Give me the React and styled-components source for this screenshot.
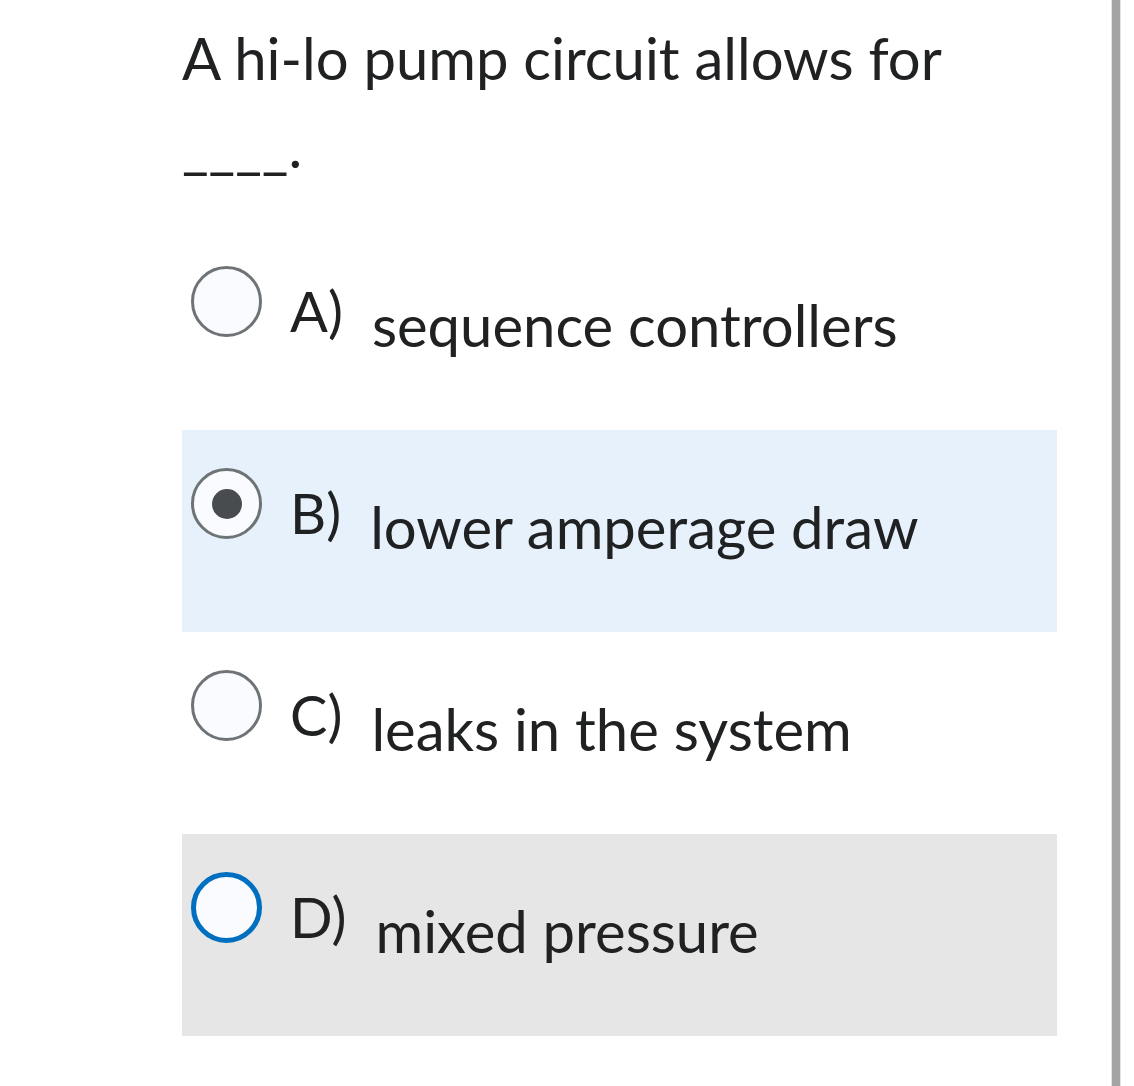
import React from "react";
import styled, { createGlobalStyle } from "styled-components";

const Global = createGlobalStyle`
  html, body { margin: 0; padding: 0; background: #ffffff; }
  body { font-family: Lato, "Open Sans", sans-serif; color: #202122; }
`;

const Page = styled.div`
  display: flex;
  min-height: 1086px;
  width: 1134px;
  overflow: hidden;
`;

const Content = styled.main`
  width: 875px;
  margin-left: 182px;
  padding-top: 14px;
`;

const Divider = styled.div`
  width: 8px;
  margin-left: 55px;
  background: #a4a4a4;
  box-shadow: -1px 0 0 #e4e4e4, 1px 0 0 #e4e4e4;
`;

const Question = styled.p`
  margin: 0 0 38px;
  font-size: 58px;
  line-height: 88px;
  font-weight: 400;
`;

const Options = styled.div`
  display: flex;
  flex-direction: column;
`;

const Row = styled.label`
  display: flex;
  align-items: flex-start;
  height: 202px;
  box-sizing: border-box;
  padding: 38px 0 0 9px;
  background: ${(p) => p.$bg || "transparent"};
`;

const Radio = styled.span`
  flex: none;
  width: 71px;
  height: 71px;
  box-sizing: border-box;
  border-radius: 50%;
  border: ${(p) => (p.$focus ? "5px solid #006fbf" : "3px solid #6e7376")};
  background: #f9fbff;
  display: flex;
  align-items: center;
  justify-content: center;
`;

const Dot = styled.span`
  width: 30px;
  height: 30px;
  border-radius: 50%;
  background: #494c4e;
`;

const Letter = styled.span`
  font-size: 56px;
  line-height: 56px;
  margin: 17px 0 0 28px;
`;

const Text = styled.span`
  font-size: 58px;
  line-height: 58px;
  margin: 30px 0 0 29px;
`;

const options = [
  { l: "A)", t: "sequence controllers" },
  { l: "B)", t: "lower amperage draw", bg: "#e7f1fb", checked: true },
  { l: "C)", t: "leaks in the system" },
  { l: "D)", t: "mixed pressure", bg: "#e6e6e6", focus: true },
];

export default function App() {
  return (
    <>
      <Global />
      <Page>
        <Content>
          <Question>
            A hi-lo pump circuit allows for
            <br />
            ____.
          </Question>
          <Options>
            {options.map((o) => (
              <Row key={o.l} $bg={o.bg}>
                <Radio $focus={o.focus}>{o.checked && <Dot />}</Radio>
                <Letter>{o.l}</Letter>
                <Text>{o.t}</Text>
              </Row>
            ))}
          </Options>
        </Content>
        <Divider />
      </Page>
    </>
  );
}
